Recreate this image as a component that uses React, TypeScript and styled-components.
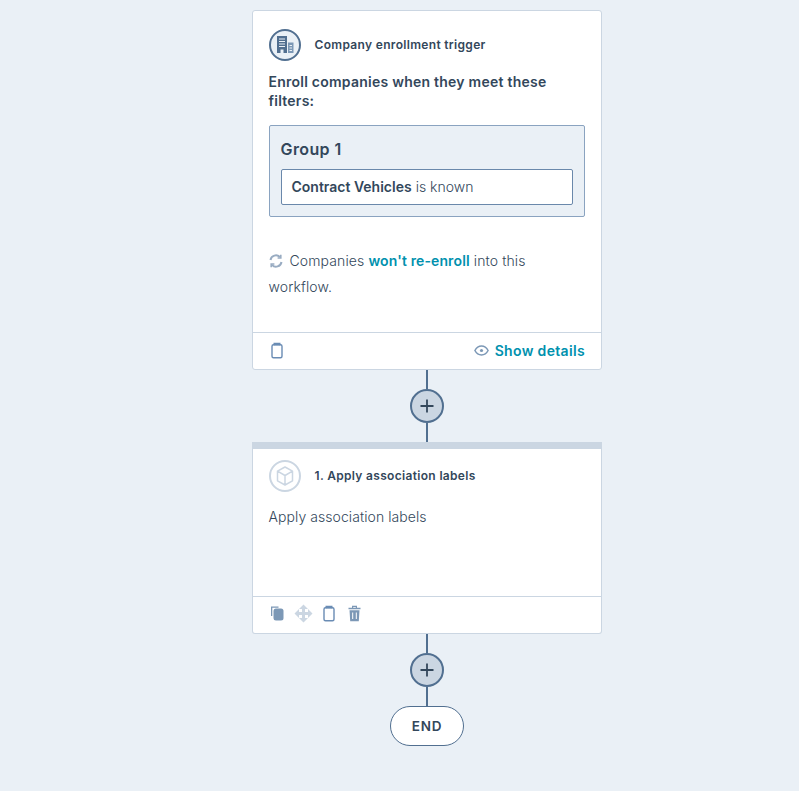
import React from "react";
import styled, { createGlobalStyle } from "styled-components";

const GlobalStyle = createGlobalStyle`
  html, body {
    margin: 0;
    padding: 0;
    background-color: #eaf0f6;
  }
  body {
    font-family: Inter, Lato, sans-serif;
    color: #33475b;
  }
`;

const Canvas = styled.div`
  width: 799px;
  height: 791px;
  overflow: hidden;
  box-sizing: border-box;
  padding: 10px 0 0 252px;
  background-color: #eaf0f6;
`;

const Column = styled.div`
  width: 350px;
  display: flex;
  flex-direction: column;
  align-items: center;
`;

const Card = styled.div<{ $height: number; $accent?: boolean }>`
  width: 100%;
  height: ${(p) => p.$height}px;
  box-sizing: border-box;
  display: flex;
  flex-direction: column;
  background-color: #fff;
  border: 1px solid #cbd6e2;
  border-top: ${(p) => (p.$accent ? "7px solid #cbd6e2" : "1px solid #cbd6e2")};
  border-radius: ${(p) => (p.$accent ? "0 0 3px 3px" : "3px")};
`;

const CardBody = styled.div<{ $top: number }>`
  flex: 1;
  padding: ${(p) => p.$top}px 16px 0 15.5px;
`;

const Header = styled.div`
  display: flex;
  align-items: center;
  gap: 14px;
  height: 32px;
`;

const Title = styled.div`
  font-size: 12px;
  font-weight: 600;
  line-height: 30px;
  letter-spacing: 0.32px;
`;

const Lead = styled.div`
  margin-top: 11px;
  font-size: 14px;
  font-weight: 600;
  line-height: 19px;
  letter-spacing: 0.24px;
`;

const GroupBox = styled.div`
  margin-top: 15px;
  height: 92px;
  box-sizing: border-box;
  padding: 12px 11px 0 11px;
  background-color: #eaf0f6;
  border: 1px solid #8aa3c0;
  border-radius: 2px;
`;

const GroupTitle = styled.div`
  font-size: 16px;
  font-weight: 600;
  line-height: 22px;
  letter-spacing: 0.4px;
`;

const Filter = styled.div`
  margin-top: 9px;
  height: 36px;
  box-sizing: border-box;
  display: flex;
  align-items: center;
  gap: 4px;
  padding: 0 10px 1px 10px;
  font-size: 14px;
  font-weight: 300;
  background-color: #fff;
  border: 1px solid #6a88ab;
  border-radius: 2px;

  b {
    font-weight: 600;
  }
`;

const Note = styled.div`
  margin-top: 31px;
  max-width: 300px;
  font-size: 14px;
  line-height: 26px;
  font-weight: 300;
  letter-spacing: 0.12px;

  svg {
    vertical-align: -2px;
    margin-right: 7px;
  }
  b {
    font-weight: 600;
    color: #0091ae;
  }
`;

const Plain = styled.div`
  margin-top: 15px;
  font-size: 14px;
  line-height: 20px;
  font-weight: 300;
  letter-spacing: 0.07px;
`;

const Footer = styled.div<{ $height: number }>`
  height: ${(p) => p.$height}px;
  box-sizing: border-box;
  display: flex;
  align-items: center;
  justify-content: space-between;
  padding: 0 16px 1px 16px;
  border-top: 1px solid #cbd6e2;
`;

const IconRow = styled.div`
  display: flex;
  align-items: center;
  gap: 8px;
  margin-bottom: 3px;
`;

const DetailsLink = styled.div`
  display: flex;
  align-items: center;
  gap: 6px;
  font-size: 14px;
  font-weight: 600;
  letter-spacing: 0.33px;
  color: #0091ae;
`;

const Line = styled.div<{ $height: number }>`
  width: 2px;
  height: ${(p) => p.$height}px;
  background-color: #516f90;
`;

const AddButton = styled.div`
  width: 34px;
  height: 34px;
  box-sizing: border-box;
  display: flex;
  align-items: center;
  justify-content: center;
  background-color: #cbd6e2;
  border: 2px solid #516f90;
  border-radius: 50%;
`;

const EndPill = styled.div`
  width: 74px;
  height: 40px;
  box-sizing: border-box;
  display: flex;
  align-items: center;
  justify-content: center;
  font-size: 13.5px;
  font-weight: 600;
  letter-spacing: 0.8px;
  background-color: #fff;
  border: 1px solid #516f90;
  border-radius: 20px;
`;

const BuildingIcon = () => (
  <svg width="32" height="32" viewBox="0 0 32 32">
    <circle cx="16" cy="16" r="15" fill="#eaf0f6" stroke="#516f90" strokeWidth="2" />
    <path d="M8 7h10v17h-3.500v-3.500h-3V24H8z" fill="#516f90" />
    <path d="M10 10h6M10 12.500h6M10 15h6M10 17.500h6" stroke="#eaf0f6" strokeWidth="1" />
    <path d="M19 13.500h5.500V24H19z" fill="#7c98b6" />
    <path d="M20.500 16.500h2.500M20.500 19h2.500M20.500 21.500h2.500" stroke="#eaf0f6" strokeWidth="1" />
  </svg>
);

const BoxIcon = () => (
  <svg width="32" height="32" viewBox="0 0 32 32" fill="none" stroke="#cbd6e2">
    <circle cx="16" cy="16" r="15" strokeWidth="2" />
    <path
      d="M16 7l7.500 4.200v9.600L16 25l-7.500-4.200v-9.600zM8.500 11.200l7.500 4.300 7.500-4.300M16 15.500V25"
      strokeWidth="1.500"
      strokeLinejoin="round"
    />
  </svg>
);

const SyncIcon = () => (
  <svg width="14" height="14" viewBox="0 0 14 14" fill="none" stroke="#99acc2" strokeWidth="2">
    <path d="M1.500 6A5.500 5.500 0 0 1 11 3.200" />
    <path d="M12.500 8A5.500 5.500 0 0 1 3 10.800" />
    <path d="M11.800.8v3.200H8.600M2.200 13.200V10h3.200" strokeWidth="1.600" />
  </svg>
);

const ClipboardIcon = () => (
  <svg width="15" height="17" viewBox="0 0 15 17" fill="none" stroke="#6a8cb4" strokeWidth="1.400">
    <rect x="3" y="2.700" width="10" height="13.100" rx="1.500" />
    <path d="M5.200 3.300V1.500h5.600v1.800" fill="#6a8cb4" />
  </svg>
);

const EyeIcon = () => (
  <svg width="15" height="11" viewBox="0 0 15 11" fill="none" stroke="#7c98b6" strokeWidth="1.500">
    <path d="M.9 5.500C2.500 2.500 4.800 1 7.500 1s5 1.500 6.600 4.500C12.500 8.500 10.200 10 7.500 10S2.500 8.500.9 5.500z" />
    <circle cx="7.500" cy="5.500" r="1.600" fill="#7c98b6" stroke="none" />
  </svg>
);

const CopyIcon = () => (
  <svg width="17" height="17" viewBox="0 0 17 17">
    <path d="M2 1.500h7.500v1.300H3.300V11H2z" fill="#7c98b6" />
    <rect x="4.500" y="3.500" width="10" height="12" rx="2.500" fill="#7c98b6" />
  </svg>
);

const MoveIcon = () => (
  <svg width="19" height="19" viewBox="0 0 19 19" fill="#cbd6e2">
    <path d="M9.500.5L14 5h-3v3h3V5l4.500 4.500L14 14v-3h-3v3h3l-4.500 4.500L5 14h3v-3H5v3L.5 9.500 5 5v3h3V5H5z" />
  </svg>
);

const TrashIcon = () => (
  <svg width="19" height="17" viewBox="-4.500 0 19 17">
    <path d="M0 2.700h12v1.600H0zM3.500 2.700V.8h5v1.900H7.300V2H4.700v.7z" fill="#7c98b6" />
    <path d="M1 5.200h10l-.7 11H1.700z" fill="#7c98b6" />
    <path d="M4.200 7.500v6.500M7.800 7.500v6.500" stroke="#fff" strokeWidth="1" />
  </svg>
);

const PlusIcon = () => (
  <svg width="14" height="14" viewBox="0 0 14 14" stroke="#33475b" strokeWidth="1.800">
    <path d="M7 .5v13M.5 7h13" />
  </svg>
);

const AddStep = ({ before, after }: { before: number; after: number }) => (
  <>
    <Line $height={before} />
    <AddButton>
      <PlusIcon />
    </AddButton>
    <Line $height={after} />
  </>
);

const App: React.FC = () => {
  return (
    <Canvas>
      <GlobalStyle />
      <Column>
        <Card $height={360}>
          <CardBody $top={18}>
            <Header>
              <BuildingIcon />
              <Title>Company enrollment trigger</Title>
            </Header>
            <Lead>Enroll companies when they meet these filters:</Lead>
            <GroupBox>
              <GroupTitle>Group 1</GroupTitle>
              <Filter>
                <b>Contract Vehicles</b> is known
              </Filter>
            </GroupBox>
            <Note>
              <SyncIcon />
              Companies <b>won't re-enroll</b> into this workflow.
            </Note>
          </CardBody>
          <Footer $height={37}>
            <ClipboardIcon />
            <DetailsLink>
              <EyeIcon />
              Show details
            </DetailsLink>
          </Footer>
        </Card>
        <AddStep before={19} after={19} />
        <Card $height={192} $accent>
          <CardBody $top={11}>
            <Header>
              <BoxIcon />
              <Title>1. Apply association labels</Title>
            </Header>
            <Plain>Apply association labels</Plain>
          </CardBody>
          <Footer $height={37}>
            <IconRow>
              <CopyIcon />
              <MoveIcon />
              <ClipboardIcon />
              <TrashIcon />
            </IconRow>
          </Footer>
        </Card>
        <AddStep before={19} after={19} />
        <EndPill>END</EndPill>
      </Column>
    </Canvas>
  );
};

export default App;
